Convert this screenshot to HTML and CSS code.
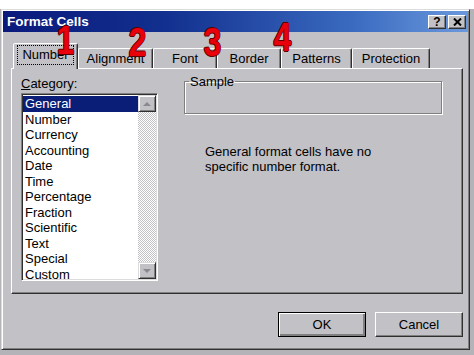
FILE: index.html
```html
<!DOCTYPE html>
<html lang="en">
<head>
<meta charset="UTF-8">
<title>Format Cells</title>
<link rel="stylesheet" href="styles.css">
</head>
<body>

<div class="dialog">
    <!-- Title bar -->
    <div class="titlebar">
        <span class="title">Format Cells</span>
        <div class="caption-buttons">
            <button class="caption-btn help">?</button>
            <button class="caption-btn close">
                <svg width="9" height="8" viewBox="0 0 9 8"><path d="M1 0.5 L8 7.5 M8 0.5 L1 7.5" stroke="#000" stroke-width="2"/></svg>
            </button>
        </div>
    </div>

    <div class="dialog-body">
        <!-- Tabs -->
        <div class="tabs">
            <div class="tab active tab-number"><span class="focus">Number</span></div>
            <div class="tab tab-alignment">Alignment</div>
            <div class="tab tab-font">Font</div>
            <div class="tab tab-border">Border</div>
            <div class="tab tab-patterns">Patterns</div>
            <div class="tab tab-protection">Protection</div>
        </div>

        <!-- Number page -->
        <div class="panel">
            <div class="col-left">
                <div class="label"><u>C</u>ategory:</div>
                <div class="listbox">
                    <ul class="items">
                        <li class="selected">General</li>
                        <li>Number</li>
                        <li>Currency</li>
                        <li>Accounting</li>
                        <li>Date</li>
                        <li>Time</li>
                        <li>Percentage</li>
                        <li>Fraction</li>
                        <li>Scientific</li>
                        <li>Text</li>
                        <li>Special</li>
                        <li>Custom</li>
                    </ul>
                    <div class="scrollbar">
                        <div class="scroll-btn"><span class="arrow up"></span></div>
                        <div class="scroll-track"></div>
                        <div class="scroll-btn"><span class="arrow down"></span></div>
                    </div>
                </div>
            </div>
            <div class="col-right">
                <fieldset class="sample">
                    <legend>Sample</legend>
                </fieldset>
                <p class="desc">General format cells have no<br>specific number format.</p>
            </div>
        </div>

        <!-- OK / Cancel -->
        <div class="footer">
            <button class="btn default">OK</button>
            <button class="btn">Cancel</button>
        </div>
    </div>

    <!-- red step numbers drawn over the tabs -->
    <span class="marker m1">1</span>
    <span class="marker m2">2</span>
    <span class="marker m3">3</span>
    <span class="marker m4">4</span>
</div>

</body>
</html>
```

FILE: styles.css
```css
html, body {
    margin: 0;
    height: 100%;
}

body {
    background: linear-gradient(#ffffff 9px, #b4b4b8 9px);
    font-family: "Liberation Sans", Arial, sans-serif;
    font-size: 13px;
    color: #000;
    overflow: hidden;
}

.dialog {
    position: relative;
    box-sizing: border-box;
    width: 469px;
    height: 341px;
    margin: 9px 0 0 1px;
    padding: 1px;
    background: #c2c1c6;
    border: 1px solid;
    border-color: #dcdcdc #303030 #303030 #dcdcdc;
    box-shadow: inset 1px 1px 0 #ffffff, inset -1px -1px 0 #808080;
    display: flex;
    flex-direction: column;
}

/* title bar */
.titlebar {
    height: 21px;
    display: flex;
    align-items: center;
    justify-content: space-between;
    padding: 0 2px 0 4px;
    background: linear-gradient(to right, #0a1a7c 0%, #12308f 35%, #3a6ac0 75%, #6a98dc 100%);
}

.title {
    color: #fff;
    font-weight: bold;
    font-size: 13.5px;
}

.caption-buttons {
    display: flex;
    gap: 2px;
}

.caption-btn {
    width: 18px;
    height: 14px;
    padding: 0;
    background: #c2c1c6;
    border: 1px solid;
    border-color: #fff #303030 #303030 #fff;
    box-shadow: inset -1px -1px 0 #808080;
    font-family: "Liberation Sans", Arial, sans-serif;
    font-weight: bold;
    font-size: 12px;
    line-height: 12px;
    display: flex;
    align-items: center;
    justify-content: center;
}

/* body */
.dialog-body {
    flex: 1;
    padding: 11px 5px 0 8px;
    display: flex;
    flex-direction: column;
}

.tabs {
    height: 25px;
    display: flex;
    align-items: flex-end;
    padding-left: 2px;
}

.tab {
    box-sizing: border-box;
    height: 20px;
    padding: 0;
    display: flex;
    align-items: center;
    justify-content: center;
    border: 1px solid;
    border-bottom: none;
    border-color: #fff #303030 transparent #fff;
    border-radius: 2px 2px 0 0;
    box-shadow: inset -1px 0 0 #808080;
}

.tab.active {
    position: relative;
    z-index: 1;
    height: 26px;
    margin-bottom: -1px;
    padding-bottom: 4px;
    background: #c2c1c6;
}

.tab-number { width: 65px; }
.tab-alignment { width: 75px; }
.tab-font { width: 64px; }
.tab-border { width: 64px; }
.tab-patterns { width: 71px; }
.tab-protection { width: 78px; }

.focus {
    border: 1px dotted #000;
    padding: 1px 4px 2px;
}

.panel {
    box-sizing: border-box;
    height: 226px;
    display: flex;
    padding: 7px 0 0 9px;
    border: 1px solid;
    border-color: #fff #303030 #303030 #fff;
    box-shadow: inset -1px -1px 0 #808080;
}

.col-left {
    width: 137px;
}

.label {
    line-height: 15px;
    margin-bottom: 2px;
}

.listbox {
    box-sizing: border-box;
    height: 188px;
    display: flex;
    background: #fff;
    border: 1px solid;
    border-color: #808080 #fff #fff #808080;
    box-shadow: inset 1px 1px 0 #303030, inset -1px -1px 0 #dcdcdc;
    padding: 1px;
    overflow: hidden;
}

.items {
    flex: 1;
    list-style: none;
    margin: 0;
    padding: 1px 0 0 0;
}

.items li {
    height: 15.5px;
    line-height: 15.5px;
    padding-left: 2px;
}

.items li.selected {
    background: #0a1e78;
    color: #fff;
}

.scrollbar {
    width: 18px;
    display: flex;
    flex-direction: column;
}

.scroll-btn {
    box-sizing: border-box;
    height: 17px;
    background: #c2c1c6;
    border: 1px solid;
    border-color: #dcdcdc #303030 #303030 #dcdcdc;
    box-shadow: inset 1px 1px 0 #fff, inset -1px -1px 0 #808080;
    display: flex;
    align-items: center;
    justify-content: center;
}

.scroll-track {
    flex: 1;
    background: repeating-conic-gradient(#ffffff 0 25%, #c2c1c6 0 50%) 0 0 / 2px 2px;
}

.arrow {
    width: 0;
    height: 0;
    border-left: 4px solid transparent;
    border-right: 4px solid transparent;
}

.arrow.up {
    border-bottom: 4px solid #8a8a8e;
}

.arrow.down {
    border-top: 4px solid #8a8a8e;
}

.col-right {
    margin-left: 26px;
    width: 258px;
}

.sample {
    box-sizing: border-box;
    height: 40px;
    margin: -2px 0 0 0;
    padding: 0;
    border: 1px solid #808080;
    box-shadow: 1px 1px 0 #fff, inset 1px 1px 0 #fff;
}

.sample legend {
    margin-left: 4px;
    padding: 0 1px;
    line-height: 15px;
}

.desc {
    margin: 30px 0 0 21px;
    line-height: 15px;
}

.footer {
    display: flex;
    justify-content: flex-end;
    gap: 9px;
    margin-top: 18px;
}

.btn {
    box-sizing: border-box;
    width: 88px;
    height: 25px;
    background: #c2c1c6;
    border: 1px solid;
    border-color: #fff #303030 #303030 #fff;
    box-shadow: inset -1px -1px 0 #808080;
    font-family: "Liberation Sans", Arial, sans-serif;
    font-size: 13px;
    color: #000;
}

.btn.default {
    border: 1px solid #000;
    box-shadow: inset 1px 1px 0 #fff, inset -2px -2px 0 #808080, inset -1px -1px 0 #303030;
}

/* step numbers pasted on top of the screenshot */
.marker {
    position: absolute;
    z-index: 2;
    font-family: "Liberation Sans", Arial, sans-serif;
    font-weight: bold;
    font-size: 41px;
    line-height: 40px;
    color: #e8000a;
    transform: scaleX(0.78);
    text-shadow: 1px 0 0 #5a0000, -1px 0 0 #5a0000, 0 1px 0 #5a0000, 0 -1px 0 #5a0000;
}

.m1 { left: 52px; top: 10px; }
.m2 { left: 124px; top: 12px; }
.m3 { left: 199px; top: 12px; }
.m4 { left: 269px; top: 7px; }
```
